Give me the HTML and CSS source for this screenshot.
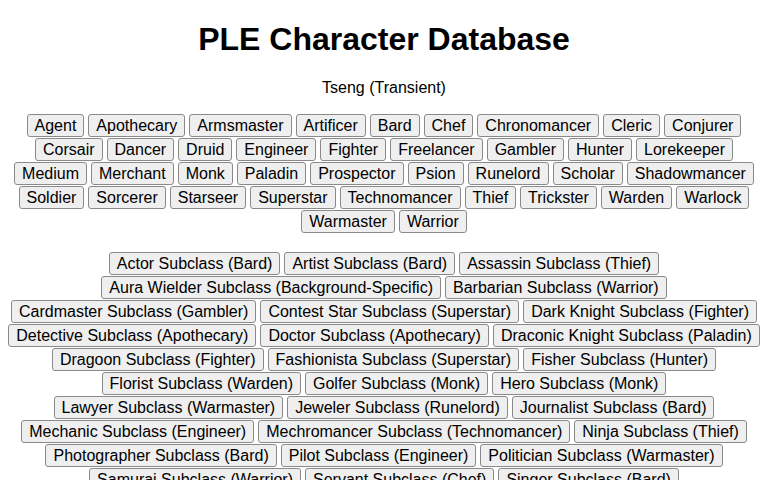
FILE: index.html
```html
<!DOCTYPE html>
<html lang="en">
<head>
  <meta charset="UTF-8" />
  <title>PLE Character Database</title>
  <link rel="stylesheet" href="styles.css">
</head>
<body>
  <h1>PLE Character Database</h1>
  <p class="who">Tseng (Transient)</p>

  <!-- base classes -->
  <div class="group">
    <button class="pick">Agent</button>
    <button class="pick">Apothecary</button>
    <button class="pick">Armsmaster</button>
    <button class="pick">Artificer</button>
    <button class="pick">Bard</button>
    <button class="pick">Chef</button>
    <button class="pick">Chronomancer</button>
    <button class="pick">Cleric</button>
    <button class="pick">Conjurer</button>
    <button class="pick">Corsair</button>
    <button class="pick">Dancer</button>
    <button class="pick">Druid</button>
    <button class="pick">Engineer</button>
    <button class="pick">Fighter</button>
    <button class="pick">Freelancer</button>
    <button class="pick">Gambler</button>
    <button class="pick">Hunter</button>
    <button class="pick">Lorekeeper</button>
    <button class="pick">Medium</button>
    <button class="pick">Merchant</button>
    <button class="pick">Monk</button>
    <button class="pick">Paladin</button>
    <button class="pick">Prospector</button>
    <button class="pick">Psion</button>
    <button class="pick">Runelord</button>
    <button class="pick">Scholar</button>
    <button class="pick">Shadowmancer</button>
    <button class="pick">Soldier</button>
    <button class="pick">Sorcerer</button>
    <button class="pick">Starseer</button>
    <button class="pick">Superstar</button>
    <button class="pick">Technomancer</button>
    <button class="pick">Thief</button>
    <button class="pick">Trickster</button>
    <button class="pick">Warden</button>
    <button class="pick">Warlock</button>
    <button class="pick">Warmaster</button>
    <button class="pick">Warrior</button>
  </div>

  <!-- subclasses -->
  <div class="group subs">
    <button class="pick">Actor Subclass (Bard)</button>
    <button class="pick">Artist Subclass (Bard)</button>
    <button class="pick">Assassin Subclass (Thief)</button>
    <button class="pick">Aura Wielder Subclass (Background-Specific)</button>
    <button class="pick">Barbarian Subclass (Warrior)</button>
    <button class="pick">Cardmaster Subclass (Gambler)</button>
    <button class="pick">Contest Star Subclass (Superstar)</button>
    <button class="pick">Dark Knight Subclass (Fighter)</button>
    <button class="pick">Detective Subclass (Apothecary)</button>
    <button class="pick">Doctor Subclass (Apothecary)</button>
    <button class="pick">Draconic Knight Subclass (Paladin)</button>
    <button class="pick">Dragoon Subclass (Fighter)</button>
    <button class="pick">Fashionista Subclass (Superstar)</button>
    <button class="pick">Fisher Subclass (Hunter)</button>
    <button class="pick">Florist Subclass (Warden)</button>
    <button class="pick">Golfer Subclass (Monk)</button>
    <button class="pick">Hero Subclass (Monk)</button>
    <button class="pick">Lawyer Subclass (Warmaster)</button>
    <button class="pick">Jeweler Subclass (Runelord)</button>
    <button class="pick">Journalist Subclass (Bard)</button>
    <button class="pick">Mechanic Subclass (Engineer)</button>
    <button class="pick">Mechromancer Subclass (Technomancer)</button>
    <button class="pick">Ninja Subclass (Thief)</button>
    <button class="pick">Photographer Subclass (Bard)</button>
    <button class="pick">Pilot Subclass (Engineer)</button>
    <button class="pick">Politician Subclass (Warmaster)</button>
    <button class="pick">Samurai Subclass (Warrior)</button>
    <button class="pick">Servant Subclass (Chef)</button>
    <button class="pick">Singer Subclass (Bard)</button>
  </div>
</body>
</html>
```

FILE: styles.css
```css
body {
  font-family: "Liberation Sans", Arial, sans-serif;
  text-align: center;
  color: #000;
  background: #fff;
}
h1 {
  font-size: 2em;
  margin: 13px 0 21px;
}
.who {
  font-size: 16px;
  margin: 16px 0 17px;
}
.group {
  display: flex;
  flex-wrap: wrap;
  justify-content: center;
  gap: 1px 4px;
  margin-bottom: 19px;
}
.pick {
  font-family: "Liberation Sans", Arial, sans-serif;
  font-size: 16px;
  line-height: 18px;
  color: #000;
  background: #efefef;
  border: 1px solid #8a8a8a;
  border-radius: 3px;
  padding: 2px 7px 1px;
  margin: 0;
}
```
